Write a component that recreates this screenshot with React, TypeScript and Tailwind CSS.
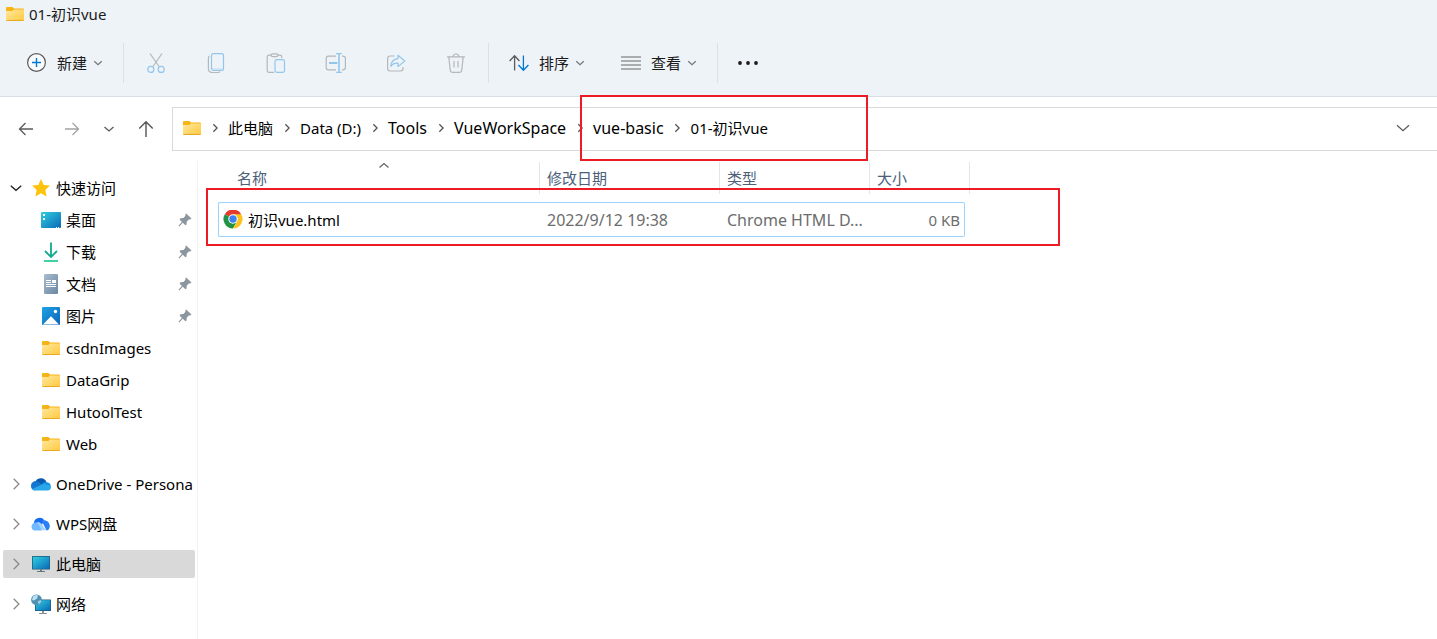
import React from "react";

interface IconProps {
  className?: string;
}

interface ChevronProps extends IconProps {
  dir: "up" | "down" | "right";
}

const chevronPaths = {
  up: "M1.5 7.5 6 3.5l4.5 4",
  down: "M1.5 4 6 8l4.5-4",
  right: "M4 1.5 8.5 6 4 10.5",
};

const Chevron = ({ dir, className }: ChevronProps) => (
  <svg viewBox="0 0 12 12" fill="none" stroke="currentColor" className={className} aria-hidden="true">
    <path d={chevronPaths[dir]} strokeWidth="1.3" vectorEffect="non-scaling-stroke" />
  </svg>
);

const FolderIcon = ({ className = "h-4 w-[18px]" }: IconProps) => (
  <svg viewBox="0 0 18 16" className={className} aria-hidden="true">
    <defs>
      <linearGradient id="folder-front" x1="0" y1="0" x2="1" y2="1">
        <stop offset="0" stopColor="#ffe8a0" />
        <stop offset="1" stopColor="#ffc93c" />
      </linearGradient>
    </defs>
    <path d="M0 2q0-1 1-1h5.5L8 2.500h9q1 0 1 1V6H0z" fill="#f7b416" />
    <path d="M0 5h6.5L8 3.500h10V14q0 1-1 1H1q-1 0-1-1z" fill="url(#folder-front)" />
    <path d="M.2 14h17.6q-.2 1-1 1H1.2q-.8 0-1-1z" fill="#e9a825" />
  </svg>
);

const NewIcon = () => (
  <svg viewBox="0 0 20 20" className="h-5 w-5" fill="none" aria-hidden="true">
    <circle cx="9.5" cy="9.5" r="8.9" fill="#fafbfc" stroke="#5a5a5a" strokeWidth="1.2" />
    <path d="M9.5 5v9M5 9.5h9" stroke="#0078d4" strokeWidth="1.4" />
  </svg>
);

const CutIcon = () => (
  <svg viewBox="0 0 20 20" className="h-5 w-5" fill="none" strokeWidth="1.2" aria-hidden="true">
    <path d="M4 .5 13.4 14M16 .5 6.6 14" stroke="#b4b8bb" />
    <circle cx="4.8" cy="16.4" r="3" stroke="#94c6ec" />
    <circle cx="15.2" cy="16.4" r="3" stroke="#94c6ec" />
  </svg>
);

const CopyIcon = () => (
  <svg viewBox="0 0 20 20" className="h-5 w-5" fill="none" strokeWidth="1.2" aria-hidden="true">
    <path d="M3.6 3Q2.4 3.6 2.4 5v10.5q0 4 4 4H12q1.4 0 2-1" stroke="#b4b8bb" />
    <rect x="5.5" y=".6" width="12" height="16.8" rx="2" stroke="#94c6ec" />
    <path d="M6 16h11" stroke="#c5e0f5" />
  </svg>
);

const PasteIcon = () => (
  <svg viewBox="0 0 20 20" className="h-5 w-5" fill="none" strokeWidth="1.2" aria-hidden="true">
    <path d="M8 19.3H3q-1.8 0-1.8-1.800V4Q1.200 2.200 3 2.200h2.500M11.500 2.200H14q1.800 0 1.800 1.800v1" stroke="#b4b8bb" />
    <rect x="5.2" y=".8" width="6.6" height="2.8" rx="1.4" stroke="#b4b8bb" />
    <rect x="9" y="6.6" width="9.5" height="12.7" rx="1.8" stroke="#94c6ec" />
  </svg>
);

const RenameIcon = () => (
  <svg viewBox="0 0 22 20" className="h-5 w-[22px]" fill="none" strokeWidth="1.2" aria-hidden="true">
    <path d="M11 3.2H3.5Q1.2 3.2 1.2 5.500v9q0 2.300 2.300 2.300H11M17 3.200h1q2.400 0 2.400 2.300v9q0 2.300-2.400 2.300h-1" stroke="#b4b8bb" />
    <path d="M11.2.6h5.6M11.2 19.4h5.6" stroke="#94c6ec" />
    <path d="M14 .6v18.8" stroke="#94c6ec" strokeWidth="1.6" />
    <path d="M4 10h8.5" stroke="#94c6ec" strokeWidth="2" />
  </svg>
);

const ShareIcon = () => (
  <svg viewBox="0 0 20 20" className="h-5 w-5" fill="none" strokeWidth="1.2" strokeLinejoin="round" aria-hidden="true">
    <path d="M8.5 3H4Q1.6 3 1.6 5.400v10.200Q1.600 18 4 18h10.600q2.400 0 2.400-2.400V14" stroke="#b4b8bb" />
    <path d="M12 2.200 18.800 8 12 13.600v-3.400q-4.700-.4-7.200 3.200.3-7 7.200-7.800z" stroke="#94c6ec" />
  </svg>
);

const DeleteIcon = () => (
  <svg viewBox="0 0 20 20" className="h-5 w-5" fill="none" stroke="#b4b8bb" strokeWidth="1.2" aria-hidden="true">
    <path d="M1 3.800h18M7.300 3.500Q7.300 1 10 1t2.700 2.500M2.800 4l1.500 13.400q.2 1.900 2 1.900h7.400q1.800 0 2-1.900L17.200 4M8 8v6.500M12 8v6.500" />
  </svg>
);

const SortIcon = () => (
  <svg viewBox="0 0 20 18" className="h-[18px] w-5" fill="none" strokeWidth="1.3" aria-hidden="true">
    <path d="M5.600 16.500V1.800M.6 7l5-5.300L10.400 7" stroke="#5a5a5a" />
    <path d="M14.400 1.500v14.700M9.400 11l5 5.300 5-5.300" stroke="#0078d4" />
  </svg>
);

const ViewIcon = () => (
  <svg viewBox="0 0 20 14" className="h-3.5 w-5" stroke="#666" strokeWidth="1.2" aria-hidden="true">
    <path d="M0 1h20M0 5h20M0 9h20M0 13h20" />
  </svg>
);

const MoreIcon = () => (
  <svg viewBox="0 0 20 4" className="h-1 w-5" fill="#1b1b1b" aria-hidden="true">
    <circle cx="2" cy="2" r="1.9" />
    <circle cx="10" cy="2" r="1.9" />
    <circle cx="18" cy="2" r="1.9" />
  </svg>
);

const ArrowIcon = ({ className }: IconProps) => (
  <svg viewBox="0 0 16 16" className={className} fill="none" stroke="currentColor" strokeWidth="1.3" aria-hidden="true">
    <path d="M15 8H1.5M7.500 2l-6 6 6 6" />
  </svg>
);

const StarIcon = () => (
  <svg viewBox="0 0 18 18" className="h-[18px] w-5" aria-hidden="true">
    <path d="m9 0 2.700 5.900 6.300.7-4.700 4.300 1.300 6.600L9 14.300l-5.600 3.200 1.300-6.600L0 6.600l6.300-.7z" fill="#fdc40b" />
  </svg>
);

const DesktopIcon = () => (
  <svg viewBox="0 0 20 16" className="h-4 w-5" aria-hidden="true">
    <defs>
      <linearGradient id="desktop-screen" x1="0" y1="0" x2="1" y2="1">
        <stop offset="0" stopColor="#2fd0e0" />
        <stop offset="1" stopColor="#0b68b8" />
      </linearGradient>
    </defs>
    <rect width="20" height="16" rx="1" fill="url(#desktop-screen)" />
    <path d="M2 2h2v2H2zM2 6h2v2H2zM15 15h1v1h-1zM17 15h1v1h-1z" fill="#fff" />
  </svg>
);

const DownloadIcon = () => (
  <svg viewBox="0 0 20 20" className="h-5 w-5" fill="none" strokeWidth="1.8" aria-hidden="true">
    <path d="M10 .5v14M4 9l6 6 6-6" stroke="#14a88e" />
    <path d="M3 19h14" stroke="#2fcb97" />
  </svg>
);

const DocumentIcon = () => (
  <svg viewBox="0 0 20 20" className="h-5 w-5" aria-hidden="true">
    <defs>
      <linearGradient id="document-page" x1="0" y1="0" x2="1" y2="1">
        <stop offset="0" stopColor="#a9bccd" />
        <stop offset="1" stopColor="#6a87a3" />
      </linearGradient>
    </defs>
    <rect x="3" width="14" height="20" rx="1.3" fill="url(#document-page)" />
    <path d="M5 6.500h5M5 8.500h5M5 10.500h10M5 12.500h10" stroke="#fff" />
    <rect x="11" y="6" width="4" height="3" fill="#fff" />
  </svg>
);

const PictureIcon = () => (
  <svg viewBox="0 0 20 18" className="h-[18px] w-5" aria-hidden="true">
    <defs>
      <linearGradient id="picture-sky" x1="0" y1="0" x2="1" y2="1">
        <stop offset="0" stopColor="#1fa2e5" />
        <stop offset="1" stopColor="#0b64b8" />
      </linearGradient>
    </defs>
    <rect x="1" width="18" height="18" rx="1" fill="url(#picture-sky)" />
    <path d="m2 17.500 8-8.300 8 8.300z" fill="#fff" />
    <circle cx="14.500" cy="4.500" r="1.700" fill="#fff" />
  </svg>
);

const OneDriveIcon = () => (
  <svg viewBox="0 0 20 14" className="h-3.5 w-5" aria-hidden="true">
    <path d="M4.500 4.500a6 6 0 0 1 11 .8L9 10z" fill="#0a5bb0" />
    <path d="M0 9a4.600 4.600 0 0 1 7-4.200l6 4L4 13.500A4.500 4.500 0 0 1 0 9z" fill="#1377cf" />
    <path d="M11 7.500a4.700 4.700 0 0 1 5-2.300 4.200 4.200 0 0 1 3.800 4z" fill="#1590df" />
    <path d="M1.200 12 13 6.500q1.500 1.200 6.800 2.500.8 4-3.300 4.500h-12Q2.300 13.500 1.200 12z" fill="#28a8ea" />
  </svg>
);

const WpsCloudIcon = () => (
  <svg viewBox="0 0 20 14" className="h-3.5 w-5" aria-hidden="true">
    <path d="M3 6.500A5.500 5.500 0 0 1 13.500 4l-3 4z" fill="#156cf2" />
    <path d="M10.500 3.500q7-1 8.200 4.700.5 4.500-3.200 5.300z" fill="#2b7ff6" />
    <path d="M.5 9.800Q.8 6 4.500 5.500q3 .2 5 4l1.500 4H4Q.7 13.300.5 9.800z" fill="#70b8ff" />
    <path d="M6.500 5q3.500 0 5.500 4 1.500 3.500 4 4.300h-3.500q-2.200 0-4-4.300-1-2.500-3-3.500z" fill="#9ed0ff" />
  </svg>
);

const ComputerIcon = () => (
  <svg viewBox="0 0 20 18" className="h-[18px] w-5" aria-hidden="true">
    <rect x="1" y="1" width="18" height="13.500" rx=".5" fill="#1d607f" />
    <rect x="1.800" y="1.800" width="16.400" height="12" fill="url(#desktop-screen)" />
    <path d="M9 14.500h2V16h3v1H6v-1h3z" fill="#6b7780" />
  </svg>
);

const NetworkIcon = () => (
  <svg viewBox="0 0 20 20" className="h-5 w-5" aria-hidden="true">
    <rect x="4" y="5.500" width="16" height="11.500" rx=".5" fill="#1d607f" />
    <rect x="4.800" y="6.200" width="14.400" height="10" fill="url(#desktop-screen)" />
    <path d="M11 17h2v2h3v1H8v-1h3z" fill="#8a959c" />
    <circle cx="5.500" cy="5.800" r="5.400" fill="#4e91b3" />
    <path d="M2 2.500q3-2.500 5-1L6 4.500 3 6.500 1 6z" fill="#bfe0ee" />
    <path d="M6.500 7.500 9.500 6l1 1.500-2.500 3z" fill="#9fcbdf" />
  </svg>
);

const PinIcon = () => (
  <svg viewBox="0 0 14 14" className="h-3.5 w-3.5" fill="#8b969e" aria-hidden="true">
    <path d="M8.200.6 13.500 5.400 12.300 6.400 11 6.300 8.700 8.800 8.600 11.600 7.400 12.200 4.800 9.700 1.200 13.400.4 12.800 3.900 8.900 1.600 6.400 2.300 5.200 5.400 5.100 7.500 2.800 7.300 1.500z" />
  </svg>
);

const ChromeIcon = () => (
  <svg viewBox="0 0 20 20" className="h-5 w-5" aria-hidden="true">
    <path d="M10 9 1.770 4.250A9.500 9.500 0 0 1 18.230 4.250z" fill="#e33b2e" />
    <path d="M10 9 1.770 4.250A9.500 9.500 0 0 0 10 18.500l4-7.200z" fill="#229342" />
    <path d="M10 4.250h8.230A9.500 9.500 0 0 1 10 18.500l4.100-7.100z" fill="#fcc31e" />
    <circle cx="10" cy="9" r="4.750" fill="#fff" />
    <circle cx="10" cy="9" r="3.700" fill="#3b82f0" />
  </svg>
);

const Divider = () => <div className="h-10 w-px bg-[#dde1e5]" />;

const fileActions = [
  { label: "剪切", icon: <CutIcon /> },
  { label: "复制", icon: <CopyIcon /> },
  { label: "粘贴", icon: <PasteIcon /> },
  { label: "重命名", icon: <RenameIcon /> },
  { label: "共享", icon: <ShareIcon /> },
  { label: "删除", icon: <DeleteIcon /> },
];

interface MenuButtonProps {
  icon: React.ReactNode;
  label: string;
}

const MenuButton = ({ icon, label }: MenuButtonProps) => (
  <button type="button" className="flex h-10 items-center gap-2.5 whitespace-nowrap">
    {icon}
    <span className="flex items-center gap-1.5">
      {label}
      <Chevron dir="down" className="h-2.5 w-2.5 text-[#777]" />
    </span>
  </button>
);

const Toolbar = () => (
  <div className="flex h-[67px] items-center border-b border-[#d9dfe5] pl-[27px]">
    <MenuButton icon={<NewIcon />} label="新建" />
    <div className="w-5" />
    <Divider />
    <div className="flex px-0.5">
      {fileActions.map((action) => (
        <button
          key={action.label}
          type="button"
          disabled
          aria-label={action.label}
          className="flex h-10 w-15 items-center justify-center"
        >
          {action.icon}
        </button>
      ))}
    </div>
    <Divider />
    <div className="flex gap-9 px-5">
      <MenuButton icon={<SortIcon />} label="排序" />
      <MenuButton icon={<ViewIcon />} label="查看" />
    </div>
    <Divider />
    <button type="button" aria-label="查看更多" className="flex h-10 w-15 items-center justify-center">
      <MoreIcon />
    </button>
  </div>
);

const crumbs = [
  { label: "此电脑", className: "text-[15px]" },
  { label: "Data (D:)", className: "text-[15px]" },
  { label: "Tools", className: "text-base" },
  { label: "VueWorkSpace", className: "text-base" },
  { label: "vue-basic", className: "text-base" },
  { label: "01-初识vue", className: "text-[15px]" },
];

const AddressBar = () => (
  <div className="flex h-16 items-center">
    <div className="flex w-[172px] shrink-0 items-center text-[#5a5a5a]">
      <button type="button" aria-label="后退" className="ml-[18px]">
        <ArrowIcon className="h-4 w-4" />
      </button>
      <button type="button" aria-label="前进" className="ml-[30px] text-[#a3a3a3]">
        <ArrowIcon className="h-4 w-4 rotate-180" />
      </button>
      <button type="button" aria-label="最近浏览的位置" className="ml-[23px]">
        <Chevron dir="down" className="h-3 w-3" />
      </button>
      <button type="button" aria-label="上一级" className="ml-[22px]">
        <ArrowIcon className="h-[18px] w-[18px] rotate-90" />
      </button>
    </div>
    <nav
      aria-label="地址"
      className="relative flex h-11 flex-1 items-center border-y border-l border-[#d9d9d9] pb-0.5 pl-2.5 pr-[26px]"
    >
      <FolderIcon />
      {crumbs.map((crumb) => (
        <React.Fragment key={crumb.label}>
          <span className="flex w-[27px] shrink-0 justify-center">
            <Chevron dir="right" className="h-2.5 w-2.5 text-[#555]" />
          </span>
          <button type="button" className={`whitespace-nowrap leading-5 ${crumb.className}`}>
            {crumb.label}
          </button>
        </React.Fragment>
      ))}
      <button type="button" aria-label="以前的位置" className="ml-auto">
        <Chevron dir="down" className="h-4 w-4 text-[#5a5a5a]" />
      </button>
      <div className="pointer-events-none absolute -top-[13px] left-[407px] h-[66px] w-72 border-2 border-[#ed1c24]" />
    </nav>
  </div>
);

const quickItems = [
  { label: "桌面", icon: <DesktopIcon />, pinned: true },
  { label: "下载", icon: <DownloadIcon />, pinned: true },
  { label: "文档", icon: <DocumentIcon />, pinned: true },
  { label: "图片", icon: <PictureIcon />, pinned: true },
  { label: "csdnImages", icon: <FolderIcon />, pinned: false },
  { label: "DataGrip", icon: <FolderIcon />, pinned: false },
  { label: "HutoolTest", icon: <FolderIcon />, pinned: false },
  { label: "Web", icon: <FolderIcon />, pinned: false },
];

const roots = [
  { label: "OneDrive - Persona", icon: <OneDriveIcon />, active: false },
  { label: "WPS网盘", icon: <WpsCloudIcon />, active: false },
  { label: "此电脑", icon: <ComputerIcon />, active: true },
  { label: "网络", icon: <NetworkIcon />, active: false },
];

const Sidebar = () => (
  <aside className="w-[198px] shrink-0 border-r border-[#f3f3f3] pl-[3px] pr-0.5 pt-[11px]">
    <button type="button" className="flex h-8 w-full items-center pl-1.5">
      <Chevron dir="down" className="h-3.5 w-3.5 text-[#222]" />
      <span className="ml-2 mr-[5px] flex w-5 justify-center">
        <StarIcon />
      </span>
      快速访问
    </button>
    <ul>
      {quickItems.map((item) => (
        <li key={item.label}>
          <button type="button" className="flex h-8 w-full items-center pl-[38px] pr-[3px]">
            <span className="mr-[5px] flex w-5 justify-center">{item.icon}</span>
            {item.label}
            {item.pinned && (
              <span className="ml-auto">
                <PinIcon />
              </span>
            )}
          </button>
        </li>
      ))}
    </ul>
    <ul className="mt-2.5 flex flex-col gap-3">
      {roots.map((root) => (
        <li key={root.label}>
          <button
            type="button"
            className={`flex h-7 w-full items-center overflow-hidden rounded-xs pl-1.5 ${
              root.active ? "bg-[#d9d9d9]" : ""
            }`}
          >
            <Chevron dir="right" className="h-3.5 w-3.5 shrink-0 text-[#8a8a8a]" />
            <span className="ml-2 mr-[5px] flex w-5 shrink-0 justify-center">{root.icon}</span>
            <span className="whitespace-nowrap">{root.label}</span>
          </button>
        </li>
      ))}
    </ul>
  </aside>
);

const FileList = () => (
  <main className="relative flex-1 overflow-hidden pl-5 pt-px">
    <table className="w-[752px] table-fixed border-separate border-spacing-0 text-left">
      <colgroup>
        <col className="w-[322px]" />
        <col className="w-[180px]" />
        <col className="w-[150px]" />
        <col className="w-[95px]" />
        <col className="w-[5px]" />
      </colgroup>
      <thead className="text-[#4c607a]">
        <tr className="h-10 align-top">
          <th className="p-0 font-normal">
            <div className="relative flex h-8 items-center border-r border-[#e5e5e5] pl-[19px]">
              <button type="button">名称</button>
              <Chevron dir="up" className="absolute left-[160px] -top-0.5 h-3 w-3 text-[#666]" />
            </div>
          </th>
          <th className="p-0 font-normal">
            <div className="flex h-8 items-center border-r border-[#e5e5e5] pl-[7px]">
              <button type="button">修改日期</button>
            </div>
          </th>
          <th className="p-0 font-normal">
            <div className="flex h-8 items-center border-r border-[#e5e5e5] pl-[7px]">
              <button type="button">类型</button>
            </div>
          </th>
          <th colSpan={2} className="p-0 font-normal">
            <div className="flex h-8 items-center border-r border-[#e5e5e5] pl-[7px]">
              <button type="button">大小</button>
            </div>
          </th>
        </tr>
      </thead>
      <tbody className="text-[#6d6d6d]">
        <tr className="h-[35px]">
          <td className="rounded-l-xs border-y border-l border-[#99d1ff] p-0 pl-1">
            <a href="#" className="flex items-center gap-[5px] text-black">
              <ChromeIcon />
              初识vue.html
            </a>
          </td>
          <td className="border-y border-[#99d1ff] p-0 pl-[7px] text-base leading-5">2022/9/12 19:38</td>
          <td className="border-y border-[#99d1ff] p-0 pl-[7px] text-base leading-5">Chrome HTML D...</td>
          <td className="rounded-r-xs border-y border-r border-[#99d1ff] p-0 pr-1 text-right">0 KB</td>
          <td className="p-0" />
        </tr>
      </tbody>
    </table>
    <div className="pointer-events-none absolute left-2 top-[27px] h-[58px] w-[854px] border-2 border-[#ed1c24]" />
  </main>
);

const App = () => (
  <div className="flex min-h-screen flex-col bg-white font-['Noto_Sans','Noto_Sans_CJK_SC',sans-serif] text-[15px] leading-5 text-black">
    <header className="bg-[#eef3f8] text-[#1b1b1b]">
      <div className="flex h-[30px] items-center gap-[5px] pb-0.5 pl-1.5">
        <FolderIcon />
        <h1>01-初识vue</h1>
      </div>
      <Toolbar />
    </header>
    <AddressBar />
    <div className="flex flex-1">
      <Sidebar />
      <FileList />
    </div>
  </div>
);

export default App;
